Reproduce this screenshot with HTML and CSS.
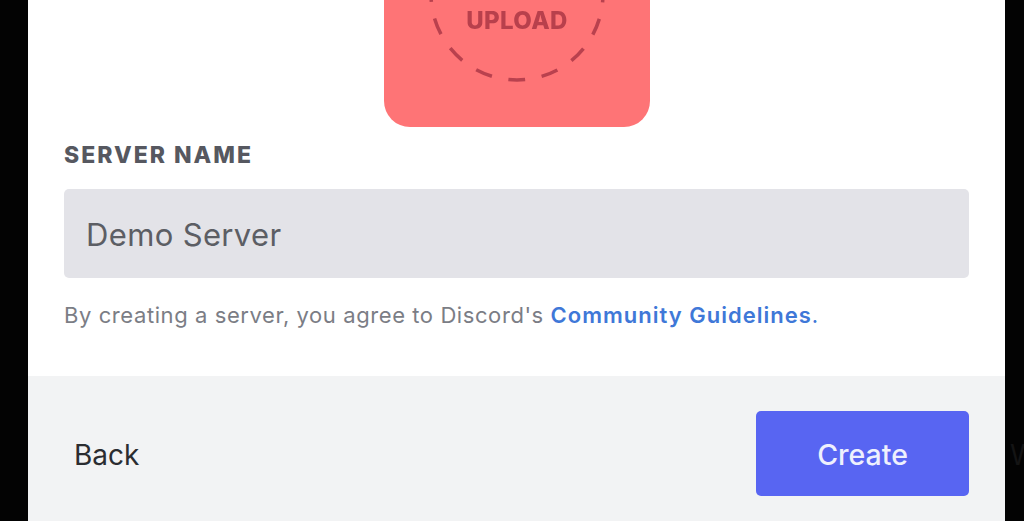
FILE: index.html
```html
<!DOCTYPE html>
<html lang="en">
<head>
<meta charset="utf-8">
<title>Create server</title>
<link rel="stylesheet" href="styles.css">
</head>
<body>
<div class="page">
  <main class="modal">
    <section class="content">
      <div class="tile">
        <svg class="ring" viewBox="0 0 266 266" width="266" height="266" aria-hidden="true">
          <circle cx="133" cy="133" r="86" />
        </svg>
        <span class="upload">UPLOAD</span>
      </div>
      <label class="label">SERVER NAME</label>
      <div class="field">Demo Server</div>
      <p class="note">By creating a server, you agree to Discord's <a class="link">Community Guidelines</a><span class="dot">.</span></p>
    </section>
    <footer class="footer">
      <span class="back">Back</span>
      <span class="create">Create</span>
    </footer>
  </main>
  <span class="behind">W</span>
</div>
</body>
</html>
```

FILE: styles.css
```css
* { box-sizing: border-box; }
html, body { margin: 0; height: 100%; background: #030303; overflow: hidden; }
body { font-family: "Inter", "Liberation Sans", sans-serif; }
.page { width: 1024px; height: 521px; padding-left: 28px; position: relative; overflow: hidden; }
.modal {
  width: 977px;
  height: 521px;
  background: #fff;
  display: flex;
  flex-direction: column;
  filter: blur(0.6px);
}
.content { height: 376px; padding: 0 36px; display: flex; flex-direction: column; }
.tile {
  width: 266px;
  height: 266px;
  margin: -139px 0 0 320px;
  flex: none;
  background: #fe7476;
  border-radius: 26px;
  position: relative;
}
.ring { display: block; }
.ring circle {
  fill: none;
  stroke: #b9414e;
  stroke-width: 3.5;
  stroke-dasharray: 17 16.77;
  stroke-dashoffset: -25.3;
}
.upload {
  position: absolute;
  left: 0;
  right: 0;
  top: 147px;
  text-align: center;
  font-size: 24px;
  line-height: 26px;
  font-weight: 800;
  letter-spacing: 0.4px;
  color: #b8404c;
}
.label {
  margin-top: 15px;
  font-size: 23px;
  line-height: 26px;
  font-weight: 800;
  letter-spacing: 2px;
  color: #565860;
}
.field {
  margin-top: 21px;
  height: 89px;
  padding: 2px 0 0 22px;
  background: #e3e3e8;
  border-radius: 5px;
  display: flex;
  align-items: center;
  font-size: 31px;
  letter-spacing: 0.35px;
  color: #5c5e64;
}
.note {
  margin: 23px 0 0;
  font-size: 22px;
  line-height: 28px;
  letter-spacing: 0.58px;
  color: #7b7d85;
}
.link { font-weight: 600; letter-spacing: 1px; color: #3f78d8; }
.dot { color: #3f78d8; }
.footer {
  flex: 1;
  background: #f2f3f4;
  padding: 10px 36px 0 46px;
  display: flex;
  align-items: center;
  justify-content: space-between;
}
.back { padding-top: 2px; font-size: 28px; color: #2b2d31; }
.create {
  width: 213px;
  height: 85px;
  padding-top: 2px;
  background: #5865f2;
  border-radius: 5px;
  display: flex;
  align-items: center;
  justify-content: center;
  font-size: 28.5px;
  font-weight: 500;
  color: #eef0fd;
}
.behind {
  position: absolute;
  left: 1010px;
  top: 438px;
  font-size: 28px;
  color: #141414;
}
```
